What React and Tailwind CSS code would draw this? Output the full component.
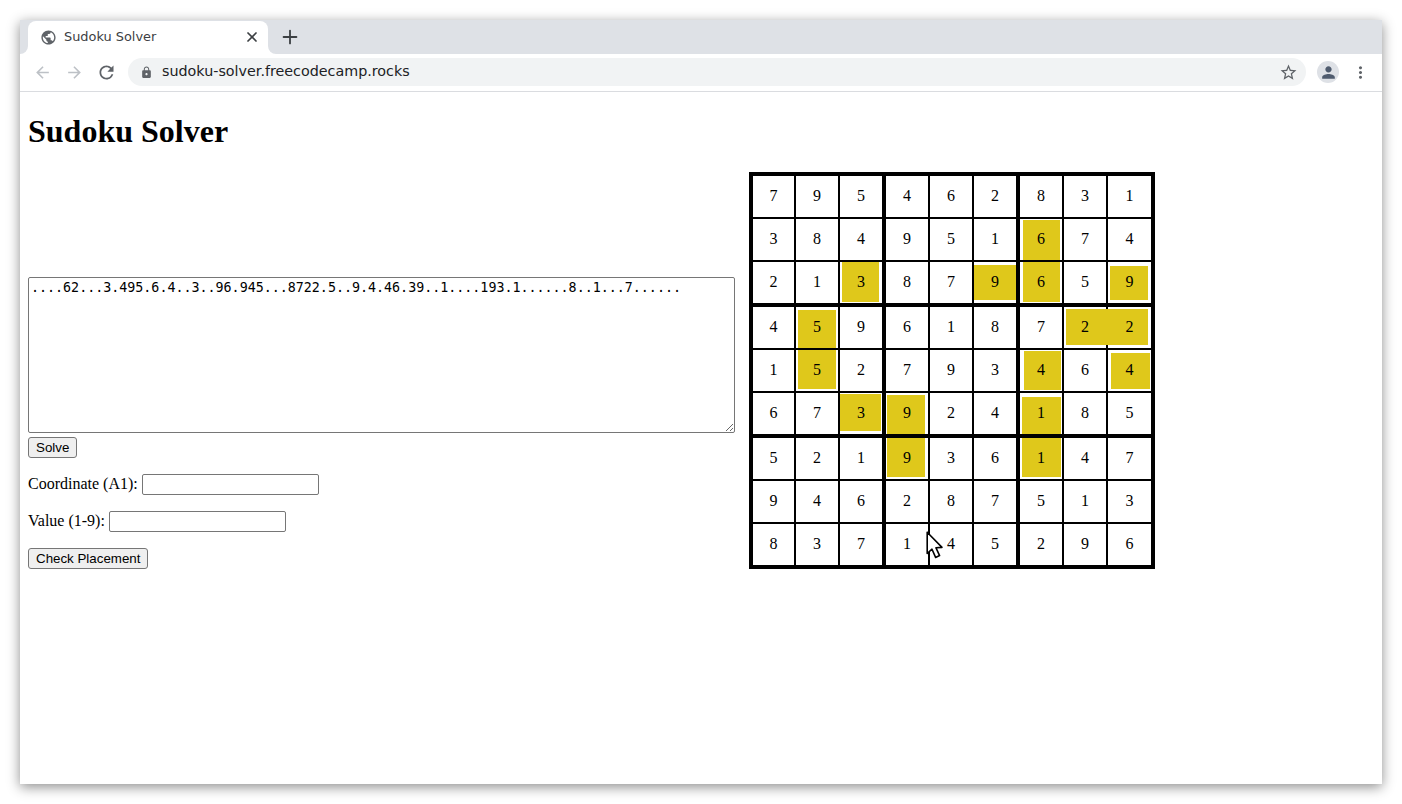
import React from "react";
import { MdPublic, MdArrowBack, MdArrowForward, MdRefresh, MdLock, MdStarBorder, MdPerson, MdMoreVert } from "react-icons/md";
import { X, Plus } from "lucide-react";

const board = [
  "795462831",
  "384951674",
  "213879659",
  "459618722",
  "152793464",
  "673924185",
  "521936147",
  "946287513",
  "837145296",
];

const marks = {
  "1-6": "left-[3px] top-[1px] w-[37px] h-[40px]",
  "2-2": "left-[2px] top-[0px] w-[37px] h-[40px]",
  "2-5": "left-[0px] top-[3px] w-[42px] h-[35px]",
  "2-6": "left-[3px] top-[0px] w-[37px] h-[40px]",
  "2-8": "left-[2px] top-[4px] w-[38px] h-[34px]",
  "3-1": "left-[2px] top-[3px] w-[38px] h-[38px]",
  "3-7": "left-[2px] top-[2px] w-[42px] h-[36px]",
  "3-8": "left-[0px] top-[2px] w-[40px] h-[36px]",
  "4-1": "left-[2px] top-[0px] w-[38px] h-[39px]",
  "4-6": "left-[4px] top-[1px] w-[37px] h-[39px]",
  "4-8": "left-[3px] top-[3px] w-[39px] h-[36px]",
  "5-2": "left-[0px] top-[1px] w-[41px] h-[37px]",
  "5-3": "left-[1px] top-[2px] w-[38px] h-[39px]",
  "5-6": "left-[2px] top-[4px] w-[39px] h-[37px]",
  "6-3": "left-[1px] top-[0px] w-[38px] h-[39px]",
  "6-6": "left-[2px] top-[0px] w-[39px] h-[39px]",
};

function Cell({ r, c, v }) {
  const right = c % 3 === 2 ? "border-r-4" : "border-r-2";
  const bottom = r % 3 === 2 ? "border-b-4" : "border-b-2";
  const mark = marks[`${r}-${c}`];
  return (
    <div className={`relative flex items-center justify-center border-black ${right} ${bottom}`}>
      {mark && <div className={`absolute bg-[#dfc81b] ${mark}`} />}
      <span className="relative z-10 mb-[2px]">{v}</span>
      {r === 8 && c === 4 && (
        <svg className="absolute left-[-4px] top-[7px] z-20" width="18" height="28" viewBox="0 0 18 28">
          <path d="M1.2 1.2 L1.2 22.5 L6 18.2 L9.6 26.4 L13.6 24.6 L10 16.8 L16 16.4 Z" fill="#fff" stroke="#000" strokeWidth="1.6" strokeLinejoin="round" />
        </svg>
      )}
    </div>
  );
}

const btn = "block h-[21px] bg-[#efefef] border border-[#767676] rounded-[3px] px-[7px] font-['Liberation_Sans',sans-serif] text-[13.3333px] leading-[15px] text-black";
const field = "h-[21px] w-[177px] bg-white border border-[#767676] rounded-[2px] px-[2px] py-[1px] text-[13.3333px] font-['Liberation_Sans',sans-serif]";

export default function App() {
  return (
    <div className="h-[804px] bg-white p-5 overflow-hidden">
      <div className="h-[764px] flex flex-col bg-white shadow-[0_3px_12px_rgba(0,0,0,0.45)] font-['Liberation_Serif',serif] text-black">
        {/* tab strip */}
        <div className="h-[34px] shrink-0 bg-[#dee1e6] flex items-end pl-2 font-['DejaVu_Sans',sans-serif]">
          <div className="relative h-[33px] w-[240px] bg-white rounded-t-[8px] flex items-center pl-[12px] pr-[8px] text-[#3c4043] text-[12.9px]">
            <div className="absolute left-[-8px] bottom-0 w-2 h-2 bg-white">
              <div className="w-full h-full bg-[#dee1e6] rounded-br-[8px]" />
            </div>
            <div className="absolute right-[-8px] bottom-0 w-2 h-2 bg-white">
              <div className="w-full h-full bg-[#dee1e6] rounded-bl-[8px]" />
            </div>
            <MdPublic size={17} className="text-[#5f6368] mr-[7px] shrink-0" />
            <span className="flex-1 truncate mb-[2px]">Sudoku Solver</span>
            <X size={16} strokeWidth={2.6} className="text-[#3c4043] shrink-0 mb-[1px]" />
          </div>
          <Plus size={22} strokeWidth={2} className="text-[#3c4043] ml-[11px] mb-[6px]" />
        </div>
        {/* toolbar */}
        <div className="h-[38px] shrink-0 bg-white border-b border-[#dadce0] flex items-center pl-[13px] pb-[1px] font-['DejaVu_Sans',sans-serif]">
          <MdArrowBack size={19} className="text-[#bdc1c6] shrink-0" />
          <MdArrowForward size={19} className="text-[#bdc1c6] ml-[13px] shrink-0" />
          <MdRefresh size={21} className="text-[#5f6368] ml-[12px] shrink-0" />
          <div className="ml-[11px] w-[1178px] h-[28px] bg-[#f1f3f4] rounded-full flex items-center pl-[12px] pr-[8px] shrink-0">
            <MdLock size={13} className="text-[#5f6368] shrink-0" />
            <span className="ml-[9px] flex-1 text-[14.3px] text-[#202124]">sudoku-solver.freecodecamp.rocks</span>
            <MdStarBorder size={19} className="text-[#5f6368] shrink-0" />
          </div>
          <div className="ml-[11px] w-[22px] h-[22px] rounded-full bg-[#dee1e6] flex items-center justify-center shrink-0">
            <MdPerson size={19} className="text-[#4f5b6e]" />
          </div>
          <MdMoreVert size={19} className="text-[#5f6368] ml-[12px] shrink-0" />
        </div>
        {/* page */}
        <div className="flex-1 px-2">
          <h1 className="text-[32px] font-bold leading-[37px] mt-[21px] mb-[22px]">Sudoku Solver</h1>
          <div className="flex items-end gap-[14px]">
            <div className="w-[707px] text-[16px]">
              <textarea
                readOnly
                className="block w-[707px] h-[156px] border border-[#767676] rounded-[2px] p-[2px] font-['DejaVu_Sans_Mono',monospace] text-[13.3333px] leading-[15px] resize bg-white outline-none"
                defaultValue="....62...3.495.6.4..3..96.945...8722.5..9.4.46.39..1....193.1......8..1...7......"
              />
              <button className={`${btn} mt-[4px]`}>Solve</button>
              <div className="mt-[16px] flex items-center h-[21px]">
                <label className="mb-[2px]">Coordinate (A1):</label>
                <input className={`${field} ml-[4px]`} />
              </div>
              <div className="mt-[16px] flex items-center h-[21px]">
                <label className="mb-[2px]">Value (1-9):</label>
                <input className={`${field} ml-[4px]`} />
              </div>
              <button className={`${btn} mt-[16px]`}>Check Placement</button>
            </div>
            <div className="grid grid-cols-[43px_44px_46px_44px_44px_46px_44px_44px_47px] grid-rows-[43px_43px_45px_43px_43px_45px_43px_43px_45px] border-l-4 border-t-4 border-black text-[16px] leading-[18px]">
              {board.map((row, r) =>
                row.split("").map((v, c) => <Cell key={`${r}-${c}`} r={r} c={c} v={v} />)
              )}
            </div>
          </div>
        </div>
      </div>
    </div>
  );
}
